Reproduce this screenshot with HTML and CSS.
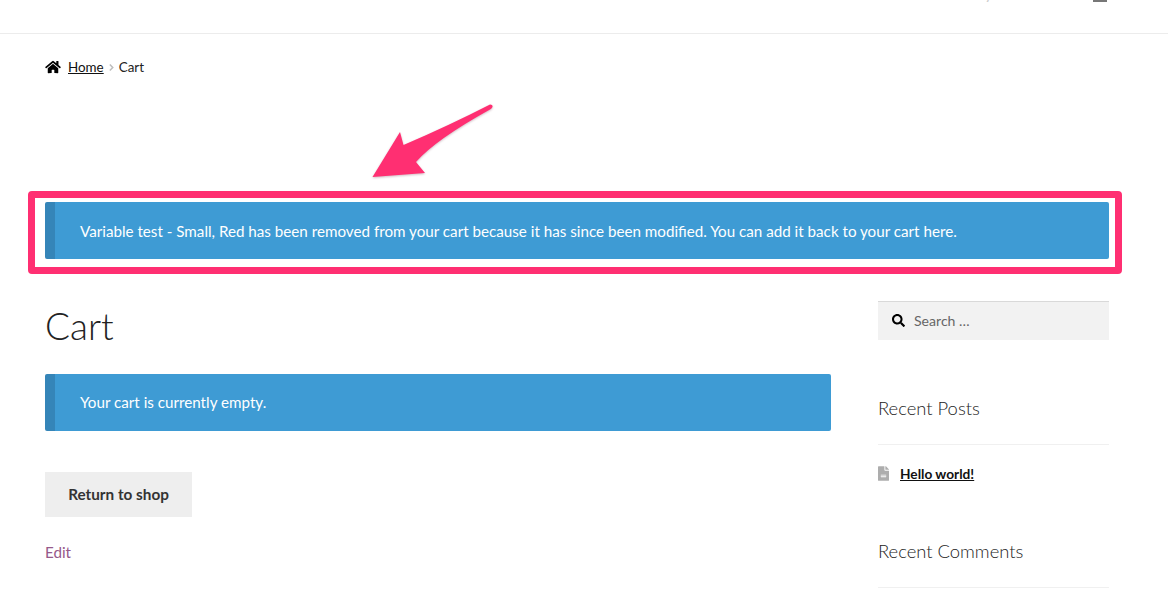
FILE: index.html
```html
<!DOCTYPE html>
<html lang="en">
<head>
<meta charset="utf-8">
<title>Cart</title>
<link rel="stylesheet" href="styles.css">
</head>
<body>
<header class="site-header">
  <span class="header-account">My Account</span>
  <span class="header-cart"></span>
</header>
<div class="page">
  <nav class="breadcrumb">
    <svg class="home-icon" viewBox="0 0 576 512" width="16" height="14"><path d="M280.400 148.300 96 300.100V464a16 16 0 0 0 16 16l112.100-.3a16 16 0 0 0 15.900-16V368a16 16 0 0 1 16-16h64a16 16 0 0 1 16 16v95.600a16 16 0 0 0 16 16.100L464 480a16 16 0 0 0 16-16V300L295.700 148.300a12.200 12.200 0 0 0-15.300 0zM571.600 251.500 488 182.600V44.100a12 12 0 0 0-12-12h-56a12 12 0 0 0-12 12v72.600L318.500 43a48 48 0 0 0-61 0L4.300 251.500a12 12 0 0 0-1.600 16.900l25.500 31A12 12 0 0 0 45.200 301l235.200-193.700a12.200 12.200 0 0 1 15.300 0L530.900 301a12 12 0 0 0 16.900-1.600l25.500-31a12 12 0 0 0-1.700-16.900z"/></svg>
    <a class="crumb-link" href="#">Home</a>
    <svg class="crumb-sep" viewBox="0 0 6 8" width="5" height="7"><path d="M1 0.500 4.500 4 1 7.500" fill="none" stroke="#bdbdbd" stroke-width="1.800"/></svg>
    <span>Cart</span>
  </nav>
  <div class="notice notice-wide">Variable test - Small, Red has been removed from your cart because it has since been modified. You can add it back to your cart here.</div>
  <div class="columns">
    <main class="content">
      <h1 class="title">Cart</h1>
      <div class="notice">Your cart is currently empty.</div>
      <a class="button" href="#">Return to shop</a>
      <a class="edit" href="#">Edit</a>
    </main>
    <aside class="sidebar">
      <div class="search">
        <svg class="search-icon" viewBox="0 0 512 512" width="13" height="13"><path d="M505 442.700 405.300 343c-4.500-4.500-10.600-7-17-7H372c27.600-35.300 44-79.700 44-128C416 93.100 322.900 0 208 0S0 93.100 0 208s93.100 208 208 208c48.300 0 92.700-16.400 128-44v16.300c0 6.400 2.500 12.500 7 17l99.700 99.700c9.400 9.400 24.600 9.400 33.900 0l28.300-28.300c9.400-9.400 9.400-24.600.1-34zM208 336c-70.700 0-128-57.200-128-128 0-70.700 57.200-128 128-128 70.700 0 128 57.200 128 128 0 70.700-57.200 128-128 128z"/></svg>
        <span>Search …</span>
      </div>
      <h2 class="widget-title first">Recent Posts</h2>
      <div class="post">
        <svg class="doc-icon" viewBox="0 0 384 512" width="11" height="15"><path fill="#adadad" d="M224 136V0H24C10.700 0 0 10.700 0 24v464c0 13.300 10.700 24 24 24h336c13.300 0 24-10.700 24-24V160H248c-13.200 0-24-10.800-24-24zm64 236c0 6.600-5.400 12-12 12H108c-6.600 0-12-5.400-12-12v-8c0-6.600 5.400-12 12-12h168c6.600 0 12 5.400 12 12v8zm0-64v8c0 6.600-5.400 12-12 12H108c-6.600 0-12-5.400-12-12v-8c0-6.600 5.400-12 12-12h168c6.600 0 12 5.400 12 12zm96-186v6H256V0h6.100c6.400 0 12.500 2.500 17 7l97.900 98c4.500 4.500 7 10.600 7 15z"/></svg>
        <a class="post-link" href="#">Hello world!</a>
      </div>
      <h2 class="widget-title second">Recent Comments</h2>
    </aside>
  </div>
</div>
<div class="highlight"></div>
<svg class="arrow" viewBox="0 0 180 100" width="180" height="100"><path fill="#ff2f72" d="M150 14.500 Q153 14.500 152.500 17 Q151.500 18.500 150 19.500 Q95 50 76 72 L85 83 L32.500 87 L60 42 L63.500 55 Q108 36 150 14.500Z"/></svg>
</body>
</html>
```

FILE: styles.css
```css
* { box-sizing: border-box; }
html, body { margin: 0; height: 600px; overflow: hidden; }
body {
  position: relative;
  background: #fff;
  color: #222;
  font-family: "Lato", "Open Sans", sans-serif;
  font-size: 15px;
}
a { color: inherit; }

.site-header {
  height: 34px;
  border-bottom: 1px solid #ececec;
  overflow: hidden;
  display: flex;
  justify-content: flex-end;
  gap: 43px;
  padding-right: 61px;
}
.header-account {
  margin-top: -14px;
  height: 15px;
  font-size: 15px;
  line-height: 15px;
  color: #ccc;
}
.header-cart { width: 14px; height: 2px; background: #777; }

.page { padding: 0 59px 0 45px; }

.breadcrumb {
  display: flex;
  align-items: center;
  height: 20px;
  margin-top: 23px;
  font-size: 13.4px;
  color: #222;
}
.home-icon { margin-right: 7px; }
.crumb-link { color: #111; }
.crumb-sep { margin: 0 5px 0 5px; }

.notice {
  height: 57px;
  padding: 0 0 1px 25px;
  display: flex;
  align-items: center;
  color: #fff;
  background: #3e9bd4;
  border-left: 10px solid #3585b8;
  border-radius: 2px;
  font-size: 15.2px;
}
.notice-wide { margin-top: 125px; padding-bottom: 0; }

.columns { display: flex; justify-content: space-between; }
.content { width: 786px; }
.title {
  margin: 42px 0 0;
  font-size: 37px;
  line-height: 50px;
  font-weight: 300;
  color: #222;
}
.content .notice { margin-top: 23px; }
.button {
  display: flex;
  align-items: center;
  justify-content: center;
  width: 147px;
  height: 45px;
  margin-top: 41px;
  padding-bottom: 2px;
  background: #eee;
  color: #333;
  font-weight: 700;
  font-size: 15.3px;
  text-decoration: none;
}
.edit {
  display: block;
  margin-top: 26px;
  color: #96588a;
  text-decoration: none;
  font-size: 15.2px;
}

.sidebar { width: 231px; }
.search {
  display: flex;
  align-items: center;
  height: 39px;
  margin-top: 42px;
  padding: 0 0 1px 14px;
  background: #f2f2f2;
  border-top: 1px solid #d9d9d9;
  color: #666;
  font-size: 14.1px;
}
.search-icon { margin-right: 9px; }
.widget-title {
  margin: 0;
  padding-bottom: 23px;
  border-bottom: 1px solid #f0f0f0;
  font-size: 18.4px;
  line-height: 26px;
  font-weight: 300;
  color: #222;
}
.first { margin-top: 55px; }
.second { margin-top: 55px; }
.post { display: flex; align-items: center; height: 20px; margin-top: 18px; }
.doc-icon { margin-right: 11px; }
.post-link { font-size: 13.7px; font-weight: 700; color: #111; }

.highlight {
  position: absolute;
  left: 28px;
  top: 191px;
  width: 1094px;
  height: 83px;
  border: 7px solid #ff2f72;
  border-radius: 4px;
}
.arrow { position: absolute; left: 340px; top: 90px; filter: drop-shadow(0 1px 1px rgba(120, 60, 80, 0.35)); }
```
